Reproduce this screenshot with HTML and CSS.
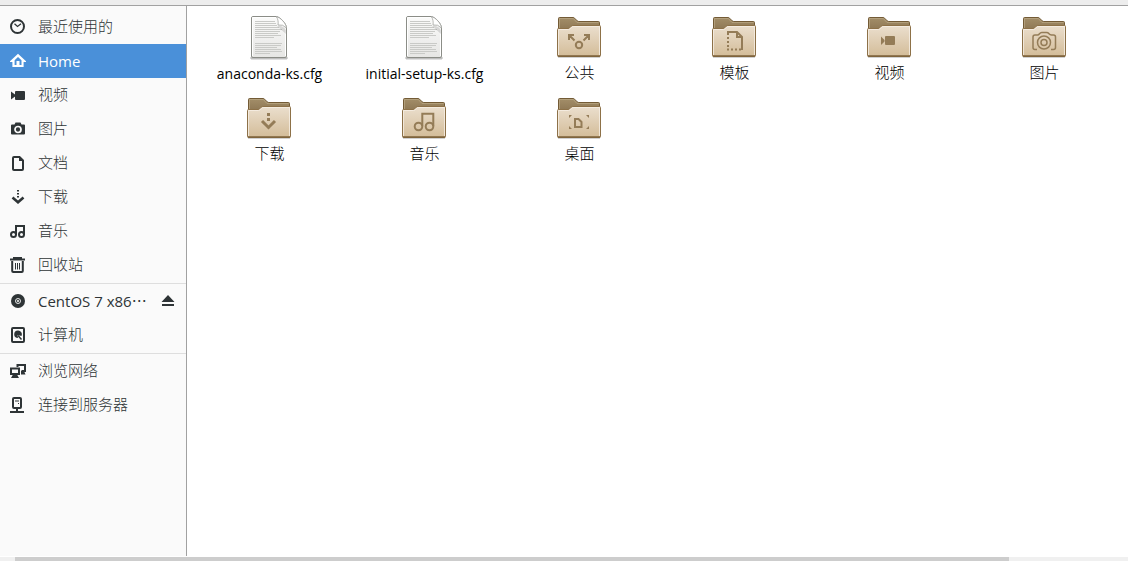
FILE: index.html
```
<!DOCTYPE html>
<html lang="zh-CN">
<head>
    <meta charset="UTF-8">
    <meta name="viewport" content="width=device-width, initial-scale=1.0">
    <title>Home</title>
    <link rel="stylesheet" href="styles.css">
</head>
<body>
    <!-- shared folder shape -->
    <svg class="defs" width="0" height="0" aria-hidden="true">
        <defs>
            <linearGradient id="back" x1="0" y1="0" x2="0" y2="1">
                <stop offset="0" stop-color="#a38e69"/>
                <stop offset="0.4" stop-color="#8a7350"/>
            </linearGradient>
            <linearGradient id="front" x1="0" y1="0" x2="0" y2="1">
                <stop offset="0" stop-color="#ebdfce"/>
                <stop offset="1" stop-color="#d3bc98"/>
            </linearGradient>
            <linearGradient id="paper" x1="0" y1="0" x2="0" y2="1">
                <stop offset="0" stop-color="#fbfbfa"/>
                <stop offset="1" stop-color="#e6e6e4"/>
            </linearGradient>
            <symbol id="folder" viewBox="0 0 48 48">
                <path d="M3 42.5h42v1.5H3z" fill="#000" opacity=".18"/>
                <path d="M3.5 40V4.5q0-1 1-1H18q1 0 1.600.7l2.600 2.600q.6.7 1.600.7H43.500q1 0 1 1V40z" fill="url(#back)" stroke="#735b36"/>
                <path d="M4.500 14V4.500H18.300l3.700 4H43.500" fill="none" stroke="#b8a582" opacity=".8"/>
                <path d="M2.500 15.500q0-1 1-1H13q1 0 1.700-.7l1.600-1.600q.7-.7 1.700-.7H44.500q1 0 1 1V41.500q0 1-1 1h-41q-1 0-1-1z" fill="url(#front)" stroke="#8d7148"/>
                <path d="M3.500 41V15.500H13.500q1 0 1.700-.7l1.500-1.600q.6-.7 1.600-.7H44.500V41" fill="none" stroke="#f6efe5" opacity=".8"/>
                <path d="M3 42h42" stroke="#7b6038" stroke-width="1.500"/>
            </symbol>
            <symbol id="textfile" viewBox="0 0 48 48">
                <path d="M6 43h36v3H6z" fill="#000" opacity=".12"/>
                <path d="M5 43h38v2H5z" fill="#000" opacity=".15"/>
                <path d="M8 2.500H31.500C35 3 41.500 9.500 41.500 14V42q0 1.500-1.500 1.500H8q-1.500 0-1.500-1.500V4Q6.500 2.500 8 2.500z" fill="url(#paper)" stroke="#8b8d87"/>
                <path d="M7.500 42V3.500H31M40.500 15V42" fill="none" stroke="#fff"/>
                <path d="M10 7.500h20M10 9.500h21M10 11.500h22M10 13.500h24M10 15.500h27M10 17.500h25M10 19.500h23M10 21.500h26M10 23.500h19M10 29.500h27M10 31.500h26M10 33.500h22M10 35.500h26M10 37.500h27M10 39.500h15" stroke="#c9cac7"/>
                <path d="M31.500 3C33 5 33.500 8 33 11q5-1 8.500 3C41 9 35 3 31.500 3z" fill="#fff" stroke="#a5a6a2" stroke-width=".8"/>
                <path d="M32 12q5-1 9 4v4z" fill="#000" opacity=".12"/>
            </symbol>
        </defs>
    </svg>

    <div class="toolbar-edge"></div>
    <div class="window">
        <nav class="sidebar">
            <ul>
                <li><a href="#">
                    <svg viewBox="0 0 16 16"><circle cx="7.500" cy="7.500" r="6.500" fill="none" stroke="currentColor" stroke-width="2"/><path d="M4.500 4.800L7.500 7.500L11 4.800" fill="none" stroke="currentColor" stroke-width="1.300"/></svg>
                    <span>最近使用的</span></a></li>
                <li><a href="#" class="active">
                    <svg viewBox="0 0 16 16"><path fill="currentColor" fill-rule="evenodd" d="M8 .8L16 8.300V9H13.600V14H2.400V9H0V8.300zM8 4L4.600 7.200V12H6.500V8H9.500V12H11.500V7.200z"/></svg>
                    <span class="latin">Home</span></a></li>
                <li><a href="#">
                    <svg viewBox="0 0 16 16"><path fill="currentColor" d="M1 4.500L5 7.500V9.500L1 12.500zM6 4h8q1 0 1 1v7q0 1-1 1H6q-1 0-1-1V5q0-1 1-1z"/></svg>
                    <span>视频</span></a></li>
                <li><a href="#">
                    <svg viewBox="0 0 16 16"><path fill="currentColor" d="M5.500 1.500h5l1 2H14q1 0 1 1v8q0 1-1 1H2q-1 0-1-1v-8q0-1 1-1h2.500z"/><circle cx="8" cy="8.500" r="3" fill="none" stroke="#fafafa" stroke-width="1.700"/></svg>
                    <span>图片</span></a></li>
                <li><a href="#">
                    <svg viewBox="0 0 16 16"><path d="M3 3q0-1 1-1h5.500L13 5.500V14q0 1-1 1H4q-1 0-1-1z" fill="none" stroke="currentColor" stroke-width="2"/><path d="M9 2v4h4z" fill="currentColor"/></svg>
                    <span>文档</span></a></li>
                <li><a href="#">
                    <svg viewBox="0 0 16 16"><path d="M2.500 8.500L8 13.200L13.500 8.500" fill="none" stroke="currentColor" stroke-width="2.600"/><path d="M7 1h2v1.500H7zM7 4h2v1.500H7zM7 7h2v1.500H7z" fill="currentColor"/></svg>
                    <span>下载</span></a></li>
                <li><a href="#">
                    <svg viewBox="0 0 16 16"><path d="M6 12V3H14V12" fill="none" stroke="currentColor" stroke-width="2"/><circle cx="3.500" cy="11.500" r="2.500" fill="none" stroke="currentColor" stroke-width="2"/><circle cx="11.500" cy="11.500" r="2.500" fill="none" stroke="currentColor" stroke-width="2"/></svg>
                    <span>音乐</span></a></li>
                <li><a href="#">
                    <svg viewBox="0 0 16 16"><path d="M0 2.500h15M2.200 4V14q0 1 1 1h8.600q1 0 1-1V4" fill="none" stroke="currentColor" stroke-width="2"/><path d="M3 0h9v2H3z" fill="currentColor"/><path d="M5.500 6v6.500M7.500 6v6.500M9.500 6v6.500" stroke="currentColor"/></svg>
                    <span>回收站</span></a></li>
            </ul>
            <ul>
                <li class="device"><a href="#">
                    <svg viewBox="0 0 16 16"><circle cx="8" cy="8" r="7" fill="currentColor"/><circle cx="8" cy="8" r="2.500" fill="none" stroke="#fafafa" stroke-width=".9"/><circle cx="8" cy="8" r="1" fill="#fafafa"/></svg>
                    <span class="latin">CentOS 7 x86<span class="more">…</span></span></a>
                    <button type="button" class="eject" aria-label="弹出"><svg viewBox="0 0 16 16"><path d="M8 2L14.500 9h-13zM2 11h12v2H2z" fill="currentColor"/></svg></button></li>
                <li><a href="#">
                    <svg viewBox="0 0 16 16"><rect x="2" y="1" width="12" height="14" rx="1" fill="none" stroke="currentColor" stroke-width="2"/><path d="M8 3.500a3.800 3.800 0 1 0 0 7.600L7.500 8L11.500 9A3.800 3.800 0 0 0 8 3.500z" fill="currentColor"/><path d="M8 8.500l3.500 4" stroke="currentColor" stroke-width="1.500"/></svg>
                    <span>计算机</span></a></li>
            </ul>
            <ul>
                <li><a href="#">
                    <svg viewBox="0 0 16 16"><path d="M7.500 4V2H15V8H11.500M1 5.500H9V11H1z" fill="none" stroke="currentColor" stroke-width="2"/><path d="M3 11.500h4l2 3.500H1zM11 8h3l1.500 3.500H11z" fill="currentColor"/></svg>
                    <span>浏览网络</span></a></li>
                <li><a href="#">
                    <svg viewBox="0 0 16 16"><rect x="3" y="1" width="8" height="10" rx="1" fill="none" stroke="currentColor" stroke-width="2"/><path d="M5 3.500h4v1H5zM8 6h1v1H8zM6 11h2v3H6zM0 14h14v2H0z" fill="currentColor"/></svg>
                    <span>连接到服务器</span></a></li>
            </ul>
        </nav>

        <main class="files">
            <a href="#" class="file">
                <svg viewBox="0 0 48 48"><use href="#textfile"/></svg>
                <span class="latin">anaconda-ks.cfg</span>
            </a>
            <a href="#" class="file">
                <svg viewBox="0 0 48 48"><use href="#textfile"/></svg>
                <span class="latin">initial-setup-ks.cfg</span>
            </a>
            <a href="#" class="file">
                <svg viewBox="0 0 48 48"><use href="#folder"/>
                    <g class="emblem"><circle cx="24" cy="31" r="3.200"/><path d="M14 26V21H19M14.500 21.500L19.500 26.500M34 26V21H29M33.500 21.500L28.500 26.500"/></g></svg>
                <span>公共</span>
            </a>
            <a href="#" class="file">
                <svg viewBox="0 0 48 48"><use href="#folder"/>
                    <g class="emblem"><path d="M17 18H27L32 23V36M27 18V23H32"/><path d="M18 19V36M17 35.500H32" stroke-dasharray="2 2"/></g></svg>
                <span>模板</span>
            </a>
            <a href="#" class="file">
                <svg viewBox="0 0 48 48"><use href="#folder"/>
                    <path class="solid" d="M16 22.500L19.500 26V27.500L16 31zM20 23q0-1 1-1h8q1 0 1 1v7q0 1-1 1h-8q-1 0-1-1z"/></svg>
                <span>视频</span>
            </a>
            <a href="#" class="file">
                <svg viewBox="0 0 48 48"><use href="#folder"/>
                    <g class="emblem thin"><path d="M17 35.500H15q-2 0-2-2V23q0-2 2-2h2.500q1 0 2-1.300T22 18.500h4.500q1.500 0 2.500 1.200T31.500 21H33.500q2 0 2 2V33.500q0 2-2 2H31"/><circle cx="24" cy="28.500" r="6.500"/><circle cx="24" cy="28.500" r="3"/></g></svg>
                <span>图片</span>
            </a>
            <a href="#" class="file">
                <svg viewBox="0 0 48 48"><use href="#folder"/>
                    <path class="solid" d="M22 18h3v3h-3zM22 23h3v3h-3z"/><path class="emblem chevron" d="M17 26L23.500 32.500L30 26"/></svg>
                <span>下载</span>
            </a>
            <a href="#" class="file">
                <svg viewBox="0 0 48 48"><use href="#folder"/>
                    <g class="emblem"><circle cx="18.500" cy="31.500" r="3.800"/><circle cx="29.500" cy="31.500" r="3.800"/><path d="M22.300 31V18.800H33.300V31"/></g></svg>
                <span>音乐</span>
            </a>
            <a href="#" class="file">
                <svg viewBox="0 0 48 48"><use href="#folder"/>
                    <path class="solid" d="M14 20h3l-3 3zM34 20v3l-3-3zM14 34v-3l3 3zM34 34h-3l3-3z"/><path class="emblem" d="M20 24H23.500L26.500 27V32H20z"/></svg>
                <span>桌面</span>
            </a>
        </main>
    </div>
    <div class="scrollbar"><div class="thumb"></div></div>
</body>
</html>
```
FILE: styles.css
```
* { box-sizing: border-box; }
body { margin: 0; min-height: 100vh; display: flex; flex-direction: column; background: #fff; color: #2e3436; font-family: "Noto Sans CJK SC", sans-serif; font-size: 15px; font-weight: 300; line-height: 20px; }
a { color: inherit; text-decoration: none; }
ul { list-style: none; margin: 0; padding: 0; }
.defs { position: absolute; }
.latin { font-family: "Open Sans", "Noto Sans CJK SC", sans-serif; font-weight: 400; }

.toolbar-edge { height: 6px; background: #ededed; border-bottom: 1px solid #a1a1a1; }
.window { flex: 1; display: flex; margin-bottom: 1px; }

.sidebar { width: 187px; flex: none; padding-top: 4px; background: #fafafa; border-right: 1px solid #a1a1a1; }
.sidebar ul + ul { border-top: 1px solid #dedede; }
.sidebar ul:first-child { padding-bottom: 1px; }
.sidebar ul:nth-child(2) { padding-bottom: 1px; }
.sidebar li { display: flex; }
.sidebar a { flex: 1; height: 34px; display: flex; align-items: center; gap: 12px; padding: 0 10px; white-space: nowrap; }
.sidebar a > span { padding-bottom: 2px; }
.sidebar a > .latin { padding-bottom: 0; }
.sidebar svg { width: 16px; height: 16px; flex: none; display: block; }
.sidebar .active { background: #4a90d9; color: #fff; }
.sidebar .device a { padding-right: 0; }
.more { font-family: "Noto Sans CJK SC", sans-serif; }
.eject { border: none; background: none; color: inherit; padding: 0 10px; cursor: pointer; }

.files { flex: 1; display: grid; grid-template-columns: repeat(auto-fill, 155px); grid-auto-rows: 81px; padding: 8px 0 0 5px; }
.file { display: flex; flex-direction: column; align-items: center; color: #000; }
.file svg { width: 48px; height: 48px; margin-right: 1px; display: block; }
.file .latin { padding-top: 2px; font-size: 14px; }
.emblem { fill: none; stroke: #947c57; stroke-width: 2; }
.thin { stroke-width: 1.5; }
.chevron { stroke-width: 3; }
.solid { fill: #947c57; }

.scrollbar { height: 4px; background: #f0f0f0; padding-left: 15px; }
.thumb { width: 89.3%; height: 4px; background: #cdcdcd; }
```
